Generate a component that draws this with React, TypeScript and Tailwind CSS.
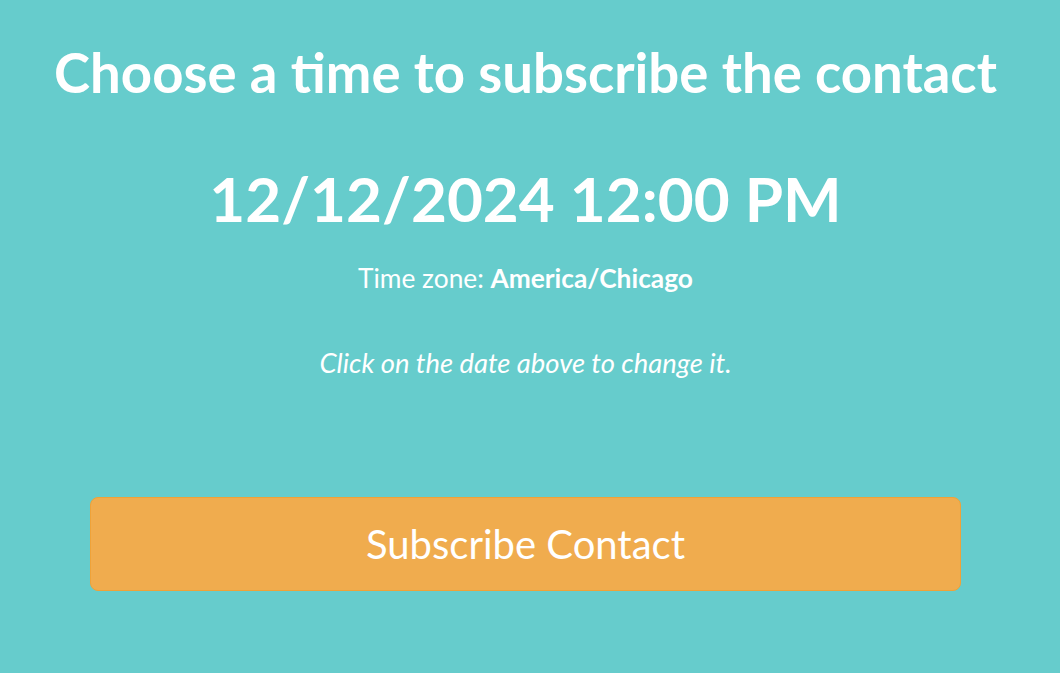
import React from "react";

export default function App() {
  return (
    <div className="w-[1060px] h-[673px] bg-[#66cccc] overflow-hidden">
      <div className="w-[1051px] flex flex-col items-center text-white" style={{ fontFamily: "Lato, 'Noto Sans', sans-serif" }}>
        <h1 className="mt-[40px] text-[54.5px] font-bold leading-[64px] whitespace-nowrap">Choose a time to subscribe the contact</h1>
        <div className="mt-[58px] text-[62px] font-bold leading-[72px] cursor-pointer whitespace-nowrap">12/12/2024 12:00 PM</div>
        <div className="mt-[29px] text-[26.3px] leading-[30px] whitespace-nowrap">
          Time zone: <span className="font-bold">America/Chicago</span>
        </div>
        <div className="mt-[54px] text-[27.4px] italic leading-[32px] whitespace-nowrap">Click on the date above to change it.</div>
        <button className="mt-[118px] w-[871px] h-[94px] rounded-[8px] bg-[#f0ac4e] border border-[#efa238] flex items-center justify-center text-[40px] leading-[48px] text-white">
          Subscribe Contact
        </button>
      </div>
    </div>
  );
}
